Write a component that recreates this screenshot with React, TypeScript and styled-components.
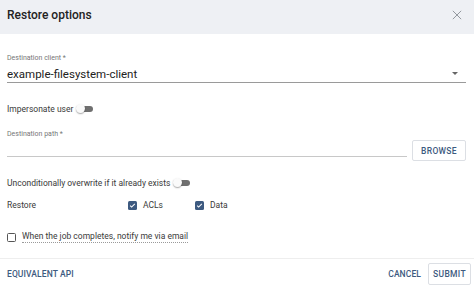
import styled, { createGlobalStyle } from 'styled-components';

const GlobalStyle = createGlobalStyle`
  html, body {
    margin: 0;
    padding: 0;
    background: #ffffff;
    font-family: Roboto, "Liberation Sans", Arial, sans-serif;
    color: #333333;
  }
`

const Dialog = styled('div')`
  width: 474px;
  height: 289px;
  display: flex;
  flex-direction: column;
  background: #ffffff;
  overflow: hidden;
`

const Header = styled('div')`
  height: 34px;
  box-sizing: border-box;
  display: flex;
  align-items: center;
  justify-content: space-between;
  padding: 0 12px 4px 7px;
  background: #eef0f4;
`

const Title = styled('h2')`
  margin: 0;
  font-size: 12px;
  font-weight: 500;
  color: #222222;
`

const CloseBtn = styled('button')`
  border: none;
  background: none;
  padding: 0;
  display: flex;
  cursor: pointer;
`

const Body = styled('div')`
  flex: 1;
  display: flex;
  flex-direction: column;
  padding: 20px 8px 0 7px;
`

const Label = styled('label')`
  display: block;
  font-size: 7px;
  color: #777777;
  line-height: 9px;
`

const SelectBox = styled('div')`
  display: flex;
  align-items: center;
  justify-content: space-between;
  height: 17px;
  margin-top: 2px;
  border-bottom: 1px solid #9a9a9a;
  font-size: 11.5px;
  color: #222222;
`

const Caret = styled('span')`
  width: 0;
  height: 0;
  margin-right: 8px;
  border-left: 3px solid transparent;
  border-right: 3px solid transparent;
  border-top: 3px solid #666666;
`

const Row = styled('div')<{ $mt: number }>`
  display: flex;
  align-items: center;
  margin-top: ${p => p.$mt}px;
  font-size: 8.5px;
  color: #3a3a3a;
  height: 12px;
`

const Toggle = styled('span')`
  position: relative;
  display: inline-block;
  width: 17px;
  height: 10px;
  margin-left: 3px;
  &::before {
    content: '';
    position: absolute;
    left: 6px;
    top: 2px;
    width: 11px;
    height: 6px;
    border-radius: 3px;
    background: #6f6f6f;
  }
  &::after {
    content: '';
    position: absolute;
    left: 0;
    top: 0;
    width: 9px;
    height: 9px;
    border-radius: 50%;
    background: #fafafa;
    box-shadow: 0 1px 1.5px rgba(0, 0, 0, 0.35);
  }
`

const PathRow = styled('div')`
  display: flex;
  align-items: flex-end;
  gap: 5px;
  margin-top: 15px;
`

const PathField = styled('div')`
  flex: 1;
`

const PathInput = styled('div')`
  height: 10px;
  margin-top: 7px;
  border-bottom: 1px solid #c8c8c8;
  margin-bottom: 4px;
`

const OutlineBtn = styled('button')<{ $w: number; $h: number }>`
  width: ${p => p.$w}px;
  height: ${p => p.$h}px;
  padding: 0;
  border: 1px solid #dcdfe4;
  border-radius: 2px;
  background: #ffffff;
  color: #3d5a80;
  font-family: inherit;
  font-size: 8.5px;
  font-weight: 500;
  letter-spacing: 0.3px;
`

const TextBtn = styled('button')`
  border: none;
  background: none;
  padding: 0;
  color: #3d5a80;
  font-family: inherit;
  font-size: 8.5px;
  font-weight: 500;
  letter-spacing: 0.1px;
`

const RestoreLabel = styled('span')`
  width: 121px;
`

const CheckItem = styled('span')<{ $w?: number }>`
  display: inline-flex;
  align-items: center;
  gap: 6px;
  width: ${p => (p.$w ? `${p.$w}px` : 'auto')};
`

const Box = styled('span')<{ $checked?: boolean }>`
  display: inline-flex;
  align-items: center;
  justify-content: center;
  width: 9px;
  height: 9px;
  box-sizing: border-box;
  border-radius: 1.5px;
  border: ${p => (p.$checked ? 'none' : '1.2px solid #555555')};
  background: ${p => (p.$checked ? '#3d5a80' : 'transparent')};
`

const Dotted = styled('span')`
  border-bottom: 1px dotted #9a9a9a;
  padding-bottom: 1px;
`

const Footer = styled('div')`
  height: 30px;
  display: flex;
  align-items: center;
  justify-content: space-between;
  padding: 0 3px 0 7px;
  border-top: 1px solid #eeeeee;
`

const FooterRight = styled('div')`
  display: flex;
  align-items: center;
  gap: 7px;
`

function Check() {
  return (
    <svg width="7" height="7" viewBox="0 0 24 24">
      <path d="M4 12.5l5 5L20 6.5" fill="none" stroke="#ffffff" strokeWidth="3.5" />
    </svg>
  )
}

export default function App() {
  return (
    <>
      <GlobalStyle />
      <Dialog>
        <Header>
          <Title>Restore options</Title>
          <CloseBtn aria-label="close">
            <svg width="10" height="10" viewBox="0 0 12 12">
              <path d="M1 1L11 11M11 1L1 11" stroke="#8a8f96" strokeWidth="1.1" />
            </svg>
          </CloseBtn>
        </Header>

        <Body>
          <Label>Destination client *</Label>
          <SelectBox>
            <span>example-filesystem-client</span>
            <Caret />
          </SelectBox>

          <Row $mt={20}>
            Impersonate user <Toggle />
          </Row>

          <PathRow>
            <PathField>
              <Label>Destination path *</Label>
              <PathInput />
            </PathField>
            <OutlineBtn $w={54} $h={21}>BROWSE</OutlineBtn>
          </PathRow>

          <Row $mt={16}>
            Unconditionally overwrite if it already exists <Toggle />
          </Row>

          <Row $mt={10}>
            <RestoreLabel>Restore</RestoreLabel>
            <CheckItem $w={67}>
              <Box $checked><Check /></Box>
              ACLs
            </CheckItem>
            <CheckItem>
              <Box $checked><Check /></Box>
              Data
            </CheckItem>
          </Row>

          <Row $mt={20}>
            <CheckItem>
              <Box />
              <Dotted>When the job completes, notify me via email</Dotted>
            </CheckItem>
          </Row>
        </Body>

        <Footer>
          <TextBtn>EQUIVALENT API</TextBtn>
          <FooterRight>
            <TextBtn>CANCEL</TextBtn>
            <OutlineBtn $w={43} $h={22}>SUBMIT</OutlineBtn>
          </FooterRight>
        </Footer>
      </Dialog>
    </>
  )
}
